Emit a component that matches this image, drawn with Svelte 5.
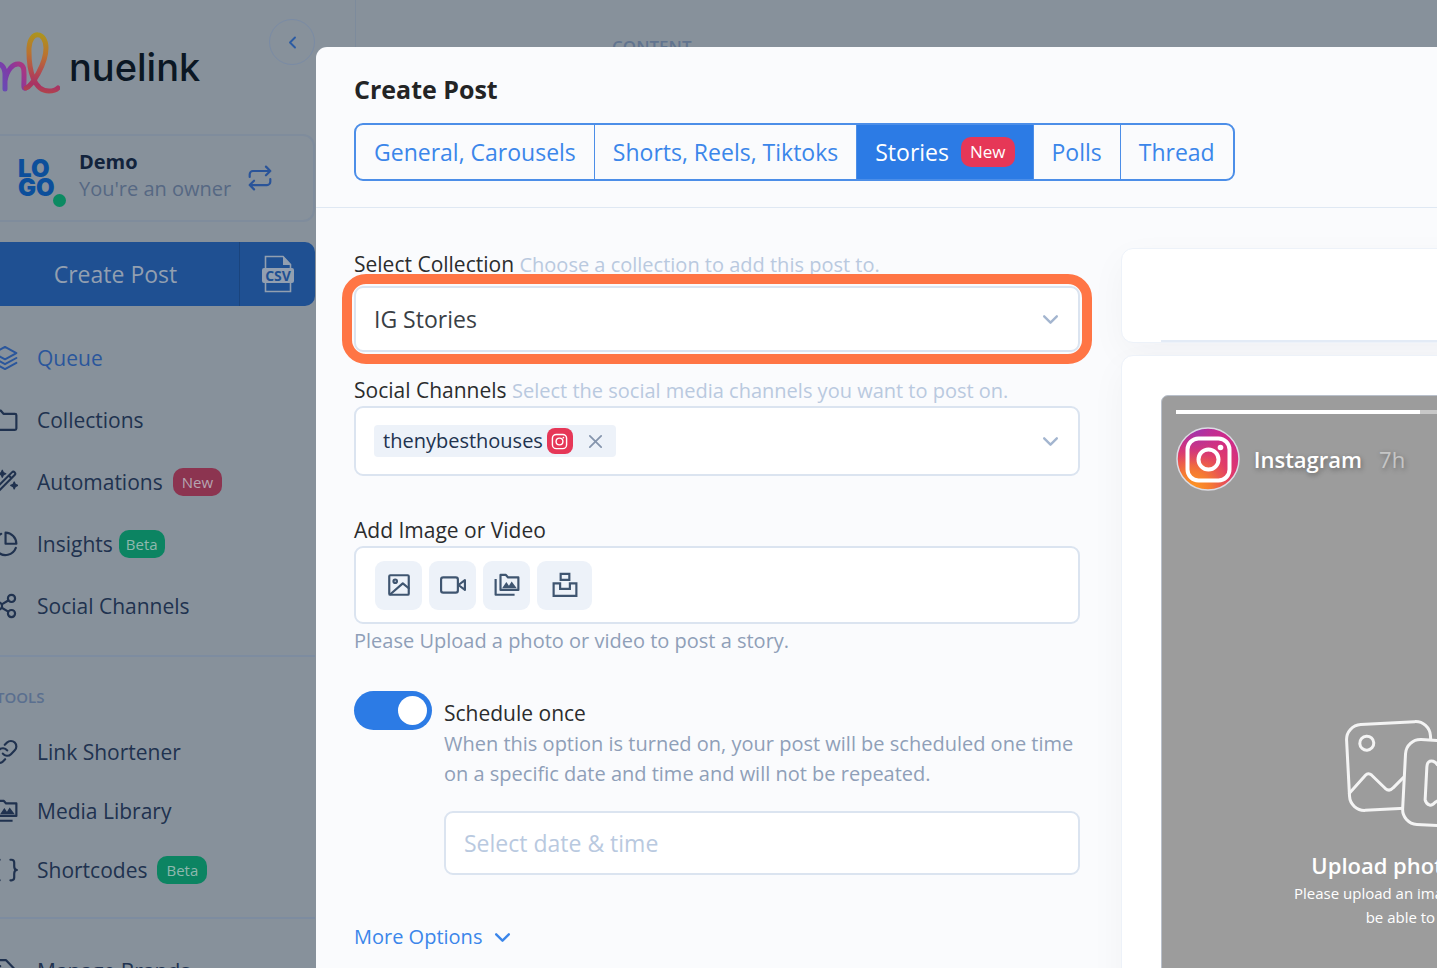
<script>
  const mainNav = [
    { icon: 'layers', label: 'Queue', active: true },
    { icon: 'folder', label: 'Collections' },
    { icon: 'wand', label: 'Automations', badge: 'New', tone: 'red' },
    { icon: 'pie', label: 'Insights', badge: 'Beta', tone: 'green', tight: true },
    { icon: 'share', label: 'Social Channels' }
  ];
  const toolNav = [
    { icon: 'link', label: 'Link Shortener' },
    { icon: 'library', label: 'Media Library' },
    { icon: 'braces', label: 'Shortcodes', badge: 'Beta', tone: 'green' }
  ];
  const tabs = [
    { label: 'General, Carousels' },
    { label: 'Shorts, Reels, Tiktoks' },
    { label: 'Stories', badge: 'New' },
    { label: 'Polls' },
    { label: 'Thread' }
  ];
  const mediaButtons = [
    { icon: 'image', label: 'Add image' },
    { icon: 'video', label: 'Add video' },
    { icon: 'library', label: 'Open media library' },
    { icon: 'unsplash', label: 'Search Unsplash', wide: true }
  ];
  let activeTab = $state('Stories');
  let scheduled = $state(true);
  let when = $state('');
</script>

{#snippet icon(name)}
  <svg class="icon" viewBox="0 0 24 24" fill="none" stroke="currentColor" stroke-width="2" stroke-linecap="round" stroke-linejoin="round" aria-hidden="true">
    {#if name === 'layers'}
      <path d="M12 1.8 22.5 7.5 12 13.2 1.5 7.5Z M1.5 12 12 17.7 22.5 12 M1.5 16.5 12 22.2 22.5 16.5" stroke-width="1.8" />
    {:else if name === 'folder'}
      <path d="M2 20V4.5a1.2 1.2 0 0 1 1.2-1.2H8l2.6 3h10.6a1.3 1.3 0 0 1 1.3 1.3v12.2a1.3 1.3 0 0 1-1.3 1.3H3.2A1.2 1.2 0 0 1 2 20Z" />
    {:else if name === 'wand'}
      <path d="M2.5 19 18.4 3.1a1.8 1.8 0 0 1 2.5 0 1.8 1.8 0 0 1 0 2.5L5 21.5a1.8 1.8 0 0 1-2.5-2.5Z M15.5 6l2.5 2.5" stroke-width="1.9" />
      <path d="M9.5 1.2l1 2.2 2.2 1-2.2 1-1 2.2-1-2.2-2.2-1 2.2-1Z M20.5 12l1 2.2 2.2 1-2.2 1-1 2.2-1-2.2-2.2-1 2.2-1Z" fill="currentColor" stroke-width="1.2" />
    {:else if name === 'pie'}
      <path d="M12.5 1.5a10.3 10.3 0 0 1 10 10.3h-10Z M8.5 2.6A10.2 10.2 0 1 0 22 15.6" />
    {:else if name === 'share'}
      <circle cx="18" cy="5" r="3.3" /><circle cx="6" cy="12" r="3.3" /><circle cx="18" cy="19" r="3.3" />
      <path d="m9 10.5 6-3.6M9 13.6l6 3.6" />
    {:else if name === 'link'}
      <path d="M10 13.5a5 5 0 0 0 7.5.5l3.5-3.6a5 5 0 0 0-7.1-7.1L11.8 5.4M14 10.5a5 5 0 0 0-7.5-.5L3 13.6a5 5 0 0 0 7.1 7.1l2-2" />
    {:else if name === 'library'}
      <path d="M6 2.7h5l2 2.3h9.5v11.5H6Z M1.5 6.5V21H19" stroke-linecap="butt" />
      <path d="M7.5 15 11.4 9.3l2.4 3.3 2.5-3.9L21 15Z" fill="currentColor" stroke="none" />
    {:else if name === 'braces'}
      <path d="M7 2.5H6A2.5 2.5 0 0 0 3.5 5v3.5C3.5 10.5 2.5 12 1 12c1.5 0 2.5 1.5 2.5 3.5V19A2.5 2.5 0 0 0 6 21.500h1M17 2.500h1A2.500 2.500 0 0 1 20.500 5v3.500c0 2 1 3.500 2.500 3.500-1.500 0-2.500 1.500-2.500 3.500V19a2.500 2.500 0 0 1-2.500 2.500h-1" />
    {:else if name === 'tag'}
      <path d="M2 12V2h11l9 9.500L12.500 22Z M7.500 7.500h.1" />
    {:else if name === 'image'}
      <rect x="3" y="3" width="18" height="18" rx="1" />
      <circle cx="8.500" cy="8.500" r="1.600" />
      <path d="M4 20.500 15.500 10.500 21 15" />
    {:else if name === 'video'}
      <rect x="1" y="5" width="15.500" height="14" rx="2" />
      <path d="M17 12l6-4.500v9Z" />
    {:else if name === 'unsplash'}
      <path d="M8 1.800h8v5.500H8Z M1.500 10.500h6v5h9v-5h6v11.500h-21Z" stroke-linejoin="miter" />
    {:else if name === 'repeat'}
      <path d="m17.500 1.500 4 4-4 4M2.500 11V8.500a3 3 0 0 1 3-3h16M6.500 22.500l-4-4 4-4M21.500 13v2.500a3 3 0 0 1-3 3h-16" />
    {:else if name === 'down'}
      <path d="m4 8 8 8 8-8" stroke-width="3" />
    {:else if name === 'left'}
      <path d="m16 4-8 8 8 8" stroke-width="3" />
    {:else if name === 'close'}
      <path d="m4 4 16 16M20 4 4 20" stroke-width="2.500" />
    {:else if name === 'instagram'}
      <rect x="2" y="2" width="20" height="20" rx="5.500" />
      <circle cx="12" cy="12" r="4.800" />
      <circle cx="17.500" cy="6.500" r="1.200" fill="currentColor" stroke="none" />
    {/if}
  </svg>
{/snippet}

{#snippet navItem(item)}
  <li>
    <a class="nav-link" class:active={item.active} class:tight={item.tight} href="#{item.icon}">
      {@render icon(item.icon)}
      <span>{item.label}</span>
      {#if item.badge}<span class="badge {item.tone}">{item.badge}</span>{/if}
    </a>
  </li>
{/snippet}

<div class="app">
  <aside class="sidebar">
    <div class="brand-row">
      <div class="brand">
        <svg class="mark" viewBox="0 0 76 68" fill="none" stroke-width="5" stroke-linecap="round" stroke-linejoin="round" aria-hidden="true">
          <defs>
            <linearGradient id="n" x1="8" y1="60" x2="42" y2="44" gradientUnits="userSpaceOnUse">
              <stop offset="0" stop-color="#4a5bb4" /><stop offset=".3" stop-color="#6a4ab4" /><stop offset=".65" stop-color="#8238a4" /><stop offset="1" stop-color="#a93781" />
            </linearGradient>
            <linearGradient id="l" x1="56" y1="4" x2="48" y2="64" gradientUnits="userSpaceOnUse">
              <stop offset="0" stop-color="#ac951d" /><stop offset=".35" stop-color="#ba7330" /><stop offset=".65" stop-color="#b34a50" /><stop offset=".85" stop-color="#a83365" /><stop offset="1" stop-color="#b34843" />
            </linearGradient>
          </defs>
          <path d="M10 36c7-3 11 2 11 10v14V52c2-11 8-18 14-17 6 1 5 8 5 15 0 7-1 10 2 9" stroke="url(#n)" />
          <path d="M42 59c6-2 20-24 20-40 0-17-16-18-17 0-.5 23 5 43 20 43 4 0 7-1 9-3" stroke="url(#l)" />
        </svg>
        <span class="wordmark">nuelink</span>
      </div>
      <button class="collapse" aria-label="Collapse sidebar">{@render icon('left')}</button>
    </div>

    <div class="account">
      <div class="avatar" aria-hidden="true"><span>LO</span><span>GO</span><i></i></div>
      <div class="who"><strong>Demo</strong><span>You're an owner</span></div>
      <button class="swap" aria-label="Switch brand">{@render icon('repeat')}</button>
    </div>

    <div class="create">
      <button class="create-main">Create Post</button>
      <button class="create-csv" aria-label="Import CSV">
        <svg viewBox="0 0 34 38" aria-hidden="true">
          <path d="M4.500 14V1.500H22l7.500 8V14M4.500 27v9.500h25V27" fill="none" stroke="currentColor" stroke-width="1.600" />
          <path d="M22 1v9h8ZM3 13h28a2 2 0 0 1 2 2v11a2 2 0 0 1-2 2H3a2 2 0 0 1-2-2V15a2 2 0 0 1 2-2Z" fill="currentColor" />
          <text x="17" y="26" text-anchor="middle">CSV</text>
        </svg>
      </button>
    </div>

    <nav>
      <ul class="main-list">
        {#each mainNav as item}{@render navItem(item)}{/each}
      </ul>
      <h2>TOOLS</h2>
      <ul class="tool-list">
        {#each toolNav as item}{@render navItem(item)}{/each}
      </ul>
      <a class="nav-link brands" href="#brands">
        {@render icon('tag')}<span>Manage Brands</span><span class="end">{@render icon('down')}</span>
      </a>
    </nav>
  </aside>

  <div class="page"><span>CONTENT</span></div>

  <div class="modal" role="dialog" aria-labelledby="title">
    <header>
      <h1 id="title">Create Post</h1>
      <div class="tabs">
        {#each tabs as tab}
          <button class:on={activeTab === tab.label} onclick={() => (activeTab = tab.label)}>
            {tab.label}{#if tab.badge}<span class="badge hot">{tab.badge}</span>{/if}
          </button>
        {/each}
      </div>
    </header>

    <div class="body">
      <form>
        <div class="field">
          <label for="collection">Select Collection <small>Choose a collection to add this post to.</small></label>
          <div class="select spotlight">
            <select id="collection"><option>IG Stories</option></select>
            <span class="chev">{@render icon('down')}</span>
          </div>
        </div>

        <div class="field channels">
          <div class="label">Social Channels <small>Select the social media channels you want to post on.</small></div>
          <div class="box">
            <span class="chip">
              thenybesthouses
              <span class="ig">{@render icon('instagram')}</span>
              <button type="button" aria-label="Remove thenybesthouses">{@render icon('close')}</button>
            </span>
            <span class="chev">{@render icon('down')}</span>
          </div>
        </div>

        <div class="field media">
          <div class="label">Add Image or Video</div>
          <div class="box">
            {#each mediaButtons as b}
              <button type="button" class="tool" class:wide={b.wide} aria-label={b.label}>{@render icon(b.icon)}</button>
            {/each}
          </div>
          <p class="help">Please Upload a photo or video to post a story.</p>
        </div>

        <div class="schedule">
          <input id="once" class="switch" type="checkbox" bind:checked={scheduled} />
          <div class="details">
            <label for="once">Schedule once</label>
            <p class="help">When this option is turned on, your post will be scheduled one time on a specific date and time and will not be repeated.</p>
            <input class="date" type="text" placeholder="Select date &amp; time" aria-label="Select date and time" bind:value={when} />
          </div>
        </div>

        <button type="button" class="more">More Options {@render icon('down')}</button>
      </form>

      <section class="side">
        <div class="card top"></div>
        <div class="card">
          <div class="story">
            <div class="progress"><i></i></div>
            <div class="profile">
              <svg viewBox="0 0 64 64" aria-hidden="true">
                <defs>
                  <radialGradient id="warm" cx=".25" cy="1" r="1">
                    <stop offset="0" stop-color="#ff9a1f" /><stop offset=".3" stop-color="#f57a33" /><stop offset=".65" stop-color="#e13c68" /><stop offset="1" stop-color="#cf2a88" />
                  </radialGradient>
                  <radialGradient id="cool" cx=".3" cy="0" r=".6">
                    <stop offset="0" stop-color="#9b36b0" /><stop offset="1" stop-color="#c92a90" stop-opacity="0" />
                  </radialGradient>
                </defs>
                <circle cx="32" cy="32" r="31" fill="url(#warm)" />
                <circle cx="32" cy="32" r="31" fill="url(#cool)" stroke="#dcdce4" stroke-width="1.500" />
                <g fill="none" stroke="#fff" stroke-width="4">
                  <rect x="11.500" y="11.500" width="42" height="42" rx="11" /><circle cx="32.500" cy="32.500" r="10" />
                </g>
                <circle cx="44.500" cy="20.500" r="2.800" fill="#fff" />
              </svg>
              <b>Instagram</b><span>7h</span>
            </div>
            <div class="upload">
              <svg viewBox="0 0 176 114" fill="none" stroke="#f4f4f4" stroke-width="3" stroke-linejoin="round" stroke-linecap="round" aria-hidden="true">
                <g transform="rotate(-3 48 49)">
                  <rect x="6" y="6" width="84" height="86" rx="15" />
                  <circle cx="26" cy="25" r="7" />
                  <path d="M6 74 23 57q3-3 6 0l13 14q4 4 8 0l22-20 18 22" />
                </g>
                <g transform="rotate(3 105 67)">
                  <rect x="62" y="24" width="86" height="85" rx="15" fill="#9c9c9c" />
                  <path d="M84 51q0-7 6-6 3 1 4 3l26 16q4 3 0 6L94 86q-2 3-5 3-4-1-5-5Z" />
                </g>
              </svg>
              <h3>Upload photo or video</h3>
              <p>Please upload an image or video. You'll<br />be able to preview</p>
            </div>
          </div>
        </div>
      </section>
    </div>
  </div>
</div>

<style>
  :global(body) { margin: 0; }
  .app, .app :global(*) { box-sizing: border-box; }
  .app {
    position: relative; display: flex; height: 100vh; overflow: hidden;
    background: #87919b; color: #2b2c2d; font: 21px/32px "Open Sans", "Noto Sans", sans-serif;
  }
  button, input, select { font: inherit; color: inherit; }
  button { border: 0; padding: 0; background: none; cursor: pointer; }
  h1, h2, h3, p, ul { margin: 0; padding: 0; }
  ul { list-style: none; }
  .icon { width: 26px; height: 26px; flex: none; display: block; }

  .sidebar {
    flex: none; width: 380px; margin-left: -24px; padding: 19px 40px 0 0;
    border-right: 1px solid #7d8b9c; color: #20324f;
  }
  .brand-row { display: flex; justify-content: space-between; align-items: flex-start; height: 115px; padding-left: 8px; }
  .brand { display: flex; align-items: flex-end; gap: 9px; padding-top: 10px; }
  .mark { width: 76px; height: 68px; }
  .wordmark { font: 500 38px/60px Inter, sans-serif; color: #0b1724; }
  .collapse {
    display: grid; place-items: center; width: 46px; height: 46px;
    border: 1px solid #7a8ba5; border-radius: 50%; color: #2b5ba3;
  }
  .collapse .icon { width: 15px; height: 15px; }
  .account {
    display: flex; align-items: center; height: 88px; padding-left: 40px;
    border: 2px solid #7f8c9c; border-radius: 12px;
  }
  .avatar { position: relative; display: grid; width: 38px; font: 900 24px/19px Inter, sans-serif; color: #0c4f9b; }
  .avatar i { position: absolute; right: -10px; bottom: -10px; width: 13px; height: 13px; border-radius: 50%; background: #0c8a62; }
  .who { display: grid; margin-left: 23px; padding-bottom: 6px; line-height: 27px; color: #566883; font-size: 20px; }
  .who strong { color: #12233c; }
  .swap { margin-left: 16px; color: #2a5499; }
  .create { display: flex; height: 64px; margin-top: 20px; border-radius: 10px; background: #1f5092; color: #929fb0; overflow: hidden; }
  .create-main { flex: 1; padding-left: 16px; font-size: 23px; }
  .create-csv { display: grid; place-items: center; width: 76px; border-left: 1px solid #1a447d; }
  .create-csv svg { width: 34px; height: 38px; }
  .create-csv text { font: 700 14px "Open Sans", sans-serif; fill: #1f5092; }

  nav { padding-top: 21px; }
  .nav-link { display: flex; align-items: center; height: 62px; padding-left: 16px; color: inherit; text-decoration: none; }
  .nav-link > .icon { margin-right: 19px; }
  .nav-link.active { color: #2a569c; }
  .main-list, .tool-list { border-bottom: 2px solid #7d8ca0; }
  .main-list { padding-bottom: 18px; }
  .tool-list { padding-bottom: 18px; }
  .tool-list .nav-link { height: 59px; }
  h2 { padding: 23px 0 8px 20px; font: 600 15px/34px "Open Sans", sans-serif; color: #5a6f8f; }
  .badge { padding: 0 9px; border-radius: 10px; font-size: 15px; line-height: 28px; margin-left: 10px; }
  .tight .badge { margin-left: 6px; padding: 0 7px; }
  .red { background: #8c3450; color: #b5a5b0; }
  .green { background: #0c8462; color: #8fb8ae; }
  .hot { background: #e63757; color: #fff; font-size: 17px; line-height: 30px; margin-left: 12px; }
  .brands { height: 104px; }
  .end { margin-left: auto; }
  .end .icon { width: 15px; height: 15px; }

  .page { padding: 36px 0 0 256px; font: 600 17px/22px "Open Sans", sans-serif; color: #61748f; }

  .modal {
    position: absolute; top: 47px; bottom: 0; left: 316px; right: -340px;
    overflow: hidden; border-radius: 11px 0 0 0; background: #fafbfd;
  }
  header { padding: 26px 38px; border-bottom: 1px solid #dfe8f3; }
  h1 { font: 700 25px/32px "Open Sans", sans-serif; color: #232425; }
  .tabs { display: inline-flex; margin-top: 18px; height: 58px; border: 2px solid #4c8ee8; border-radius: 9px; overflow: hidden; vertical-align: top; }
  .tabs button { display: flex; align-items: center; padding: 0 18px; font-size: 23px; color: #3b86ea; white-space: nowrap; }
  .tabs button + button { border-left: 1px solid #4c8ee8; }
  .tabs .on { background: #2c7be5; color: #fff; }

  .body { display: grid; grid-template-columns: 27fr 23fr; gap: 41px; padding: 40px 38px 0; }
  .label, .field label { display: block; }
  small { font-size: 20px; line-height: 20px; color: #b9c9df; }
  .box, .select, .date { border: 2px solid #dbe4f0; border-radius: 9px; background: #fff; }
  .select { position: relative; display: grid; align-items: center; height: 66px; margin-top: 6px; }
  select { appearance: none; width: 100%; height: 100%; padding: 0 18px; border: 0; border-radius: 9px; background: none; font-size: 23px; color: #3a3f46; }
  .spotlight::after { content: ''; position: absolute; inset: -14px; border: 10px solid #ff7545; border-radius: 24px; pointer-events: none; }
  .chev { color: #a3b5cf; }
  .chev .icon { width: 19px; height: 19px; }
  .select .chev { position: absolute; right: 18px; pointer-events: none; }
  .channels { margin-top: 22px; }
  .channels .box { display: flex; align-items: center; justify-content: space-between; height: 70px; padding: 0 18px; }
  .chip { display: flex; align-items: center; height: 32px; padding: 0 12px 0 9px; border-radius: 4px; background: #edf2f9; color: #22334f; font-size: 20px; }
  .ig { display: grid; place-items: center; width: 26px; height: 26px; margin: 0 14px 0 4px; border-radius: 8px; background: #e63757; color: #fff; }
  .ig .icon { width: 17px; height: 17px; }
  .chip button { color: #8595ad; }
  .chip button .icon { width: 17px; height: 17px; }
  .media { margin-top: 38px; }
  .media .box { display: flex; align-items: center; gap: 7px; height: 78px; padding: 0 19px; }
  .tool { display: grid; place-items: center; width: 47px; height: 49px; border-radius: 9px; background: #edf2f9; color: #3f5570; }
  .tool.wide { width: 55px; }
  .help { font-size: 20px; line-height: 34px; color: #8f9fb8; }
  .schedule { display: flex; gap: 12px; margin-top: 33px; }
  .switch { appearance: none; flex: none; width: 78px; height: 39px; margin: 0; padding: 5px; border-radius: 20px; background: #b6c3d6; }
  .switch::before { content: ''; display: block; width: 29px; height: 29px; border-radius: 50%; background: #fff; }
  .switch:checked { background: #2c7be5; }
  .switch:checked::before { margin-left: auto; }
  .details { flex: 1; padding-top: 6px; }
  .details label { display: block; }
  .details .help { line-height: 30px; }
  .date { display: block; width: 100%; height: 64px; margin-top: 22px; padding: 0 18px; font-size: 23px; }
  .date::placeholder { color: #b9c9df; opacity: 1; }
  .more { display: flex; align-items: center; gap: 11px; margin-top: 46px; font-size: 20px; color: #3b86ea; }
  .more .icon { width: 19px; height: 19px; }

  .side { display: grid; gap: 12px; align-content: start; }
  .card { padding: 39px; border: 1px solid #edf2f9; border-radius: 12px; background: #fff; box-shadow: 0 12px 36px rgba(18, 38, 63, .04); }
  .card.top { display: flex; align-items: flex-end; height: 95px; padding-bottom: 0; }
  .card.top::after { content: ''; flex: 1; border-bottom: 2px solid #e3ebf6; }
  .story { min-height: 956px; padding: 14px; border: 1px solid #b9c0cb; border-radius: 7px; background: #9c9c9c; color: #fff; }
  .progress { height: 4px; background: #c8c8c8; }
  .progress i { display: block; width: 48%; height: 100%; background: #fff; }
  .profile { display: flex; align-items: center; margin-top: 13px; font-size: 22px; text-shadow: 1px 2px 5px rgba(0, 0, 0, .35); }
  .profile svg { width: 64px; height: 64px; margin-right: 14px; }
  .profile b { font-weight: 600; }
  .profile span { margin-left: 17px; color: #c6c6c6; }
  .upload { margin-top: 226px; text-align: center; }
  .upload svg { display: block; width: 176px; height: 114px; margin: 0 auto 18px; }
  h3 { font: 600 22px/32px "Open Sans", sans-serif; }
  .upload p { font-size: 15px; line-height: 24px; }
</style>
